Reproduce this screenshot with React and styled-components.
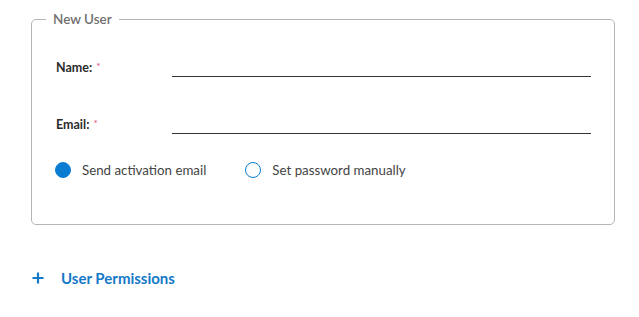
import React from "react";
import styled, { createGlobalStyle } from "styled-components";

const Global = createGlobalStyle`
  html, body { margin: 0; padding: 0; background: #fff; }
  body { font-family: Lato, "Open Sans", Arial, sans-serif; }
  * { box-sizing: border-box; }
`;

const Page = styled.div`
  padding: 11px 24px 0 31px;
  width: 639px;
`;

const Group = styled.fieldset`
  margin: 0;
  border: 1px solid #b5b5b5;
  border-radius: 5px;
  padding: 29px 23px 46px 14px;
  min-width: 0;
`;

const Legend = styled.legend`
  padding: 0 7px;
  font-size: 13.5px;
  line-height: 17px;
  color: #707070;
  font-weight: 600;
`;

const Row = styled.div`
  display: flex;
  align-items: center;
  padding-left: 10px;
  margin-top: ${(p) => p.$gap || 0}px;
`;

const Label = styled.label`
  width: 116px;
  flex: none;
  font-size: 12.5px;
  font-weight: 700;
  color: #2b2b2b;
`;

const Req = styled.span`
  color: #e0457b;
  margin-left: 4px;
  font-size: 10px;
  vertical-align: top;
  font-weight: 400;
`;

const Input = styled.input`
  flex: 1;
  height: 20px;
  border: none;
  border-bottom: 1px solid #333;
  outline: none;
  padding: 0;
  background: transparent;
  font: inherit;
`;

const Radios = styled.div`
  display: flex;
  align-items: center;
  gap: 39px;
  padding-left: 9px;
  margin-top: 28px;
`;

const RadioItem = styled.label`
  display: flex;
  align-items: center;
  gap: 11px;
  font-size: 13.3px;
  color: #444;
`;

const Dot = styled.span`
  width: 16px;
  height: 16px;
  border-radius: 50%;
  flex: none;
  background: ${(p) => (p.$on ? "#0a7dd3" : "#fff")};
  border: 1.5px solid #0a7dd3;
`;

const Expander = styled.button`
  display: flex;
  align-items: center;
  gap: 17px;
  margin-top: 44px;
  padding: 0 0 0 1px;
  border: none;
  background: none;
  font-family: inherit;
  font-size: 15px;
  font-weight: 700;
  color: #1479c8;
  cursor: pointer;
`;

export default function App() {
  return (
    <Page>
      <Global />
      <Group>
        <Legend>New User</Legend>
        <Row>
          <Label>
            Name:<Req>*</Req>
          </Label>
          <Input />
        </Row>
        <Row $gap={37}>
          <Label>
            Email:<Req>*</Req>
          </Label>
          <Input />
        </Row>
        <Radios>
          <RadioItem>
            <Dot $on />
            Send activation email
          </RadioItem>
          <RadioItem>
            <Dot />
            Set password manually
          </RadioItem>
        </Radios>
      </Group>
      <Expander>
        <svg width="12" height="12" viewBox="0 0 12 12">
          <path d="M6 0.5v11M0.5 6h11" stroke="#1479c8" strokeWidth="2.2" />
        </svg>
        User Permissions
      </Expander>
    </Page>
  );
}
